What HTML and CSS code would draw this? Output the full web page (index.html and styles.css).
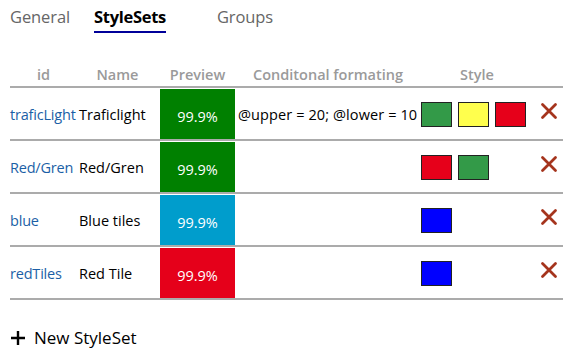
FILE: index.html
```html
<!DOCTYPE html>
<html>
<head>
<meta charset="utf-8">
<link rel="stylesheet" href="styles.css">
</head>
<body>
<div class="tabs">
  <span class="tab tab-general">General</span>
  <span class="tab tab-active">StyleSets</span>
  <span class="tab">Groups</span>
</div>
<table class="grid">
  <colgroup>
    <col class="c-id"><col class="c-name"><col class="c-prev"><col class="c-cond"><col class="c-style"><col class="c-del">
  </colgroup>
  <thead>
    <tr><th>id</th><th>Name</th><th>Preview</th><th>Conditonal formating</th><th>Style</th><th></th></tr>
  </thead>
  <tbody>
    <tr>
      <td class="id">traficLight</td>
      <td class="name">Traficlight</td>
      <td class="prev"><div class="pbox green">99.9%</div></td>
      <td class="cond">@upper = 20; @lower = 10</td>
      <td class="style"><div class="sw"><span class="s s-green"></span><span class="s s-yellow"></span><span class="s s-red"></span></div></td>
      <td class="del"><svg viewBox="0 0 18 18" width="18" height="18"><path d="M2.5 2.5 L15.5 15.5 M15.5 2.5 L2.5 15.5" stroke="#a5341d" stroke-width="2.8" stroke-linecap="round"/></svg></td>
    </tr>
    <tr>
      <td class="id">Red/Gren</td>
      <td class="name">Red/Gren</td>
      <td class="prev"><div class="pbox green">99.9%</div></td>
      <td class="cond"></td>
      <td class="style"><div class="sw"><span class="s s-red"></span><span class="s s-green"></span></div></td>
      <td class="del"><svg viewBox="0 0 18 18" width="18" height="18"><path d="M2.5 2.5 L15.5 15.5 M15.5 2.5 L2.5 15.5" stroke="#a5341d" stroke-width="2.8" stroke-linecap="round"/></svg></td>
    </tr>
    <tr>
      <td class="id">blue</td>
      <td class="name">Blue tiles</td>
      <td class="prev"><div class="pbox blue">99.9%</div></td>
      <td class="cond"></td>
      <td class="style"><div class="sw"><span class="s s-blue"></span></div></td>
      <td class="del"><svg viewBox="0 0 18 18" width="18" height="18"><path d="M2.5 2.5 L15.5 15.5 M15.5 2.5 L2.5 15.5" stroke="#a5341d" stroke-width="2.8" stroke-linecap="round"/></svg></td>
    </tr>
    <tr>
      <td class="id">redTiles</td>
      <td class="name">Red Tile</td>
      <td class="prev"><div class="pbox red">99.9%</div></td>
      <td class="cond"></td>
      <td class="style"><div class="sw"><span class="s s-blue"></span></div></td>
      <td class="del"><svg viewBox="0 0 18 18" width="18" height="18"><path d="M2.5 2.5 L15.5 15.5 M15.5 2.5 L2.5 15.5" stroke="#a5341d" stroke-width="2.8" stroke-linecap="round"/></svg></td>
    </tr>
  </tbody>
</table>
<div class="newset">
  <svg class="plus" viewBox="0 0 14 14" width="14" height="14"><path d="M7 0 V14 M0 7 H14" stroke="#000" stroke-width="2.4"/></svg>
  <span>New StyleSet</span>
</div>
</body>
</html>
```
FILE: styles.css
```css
html, body {
  margin: 0;
  padding: 0;
  background: #fff;
  font-family: "Open Sans", "Noto Sans", sans-serif;
  color: #000;
}
.tabs {
  display: flex;
  padding: 4px 0 0 10px;
  height: 29px;
}
.tab {
  font-size: 16.5px;
  color: #666;
  line-height: 26px;
  height: 27px;
  letter-spacing: -0.1px;
}
.tab-general { margin-right: 24px; }
.tab-active {
  color: #000;
  font-weight: 700;
  border-bottom: 2px solid #000099;
  margin-right: 51px;
  letter-spacing: -0.3px;
}
.grid {
  margin: 29px 0 0 10px;
  border-collapse: collapse;
  table-layout: fixed;
  width: 553px;
  font-size: 14.5px;
}
.c-id { width: 67px; }
.c-name { width: 81px; }
.c-prev { width: 79px; }
.c-cond { width: 182px; }
.c-style { width: 116px; }
.c-del { width: 28px; }
th {
  color: #9a9a9a;
  font-weight: 600;
  font-size: 14.5px;
  height: 24px;
  padding: 0;
  text-align: center;
  vertical-align: middle;
  border-bottom: 2px solid #ababab;
}
td {
  padding: 1px 0 0 0;
  height: 50px;
  border-bottom: 2px solid #ababab;
  vertical-align: middle;
  white-space: nowrap;
}
td.id { color: #1b5fa6; overflow: visible; letter-spacing: -0.2px; }
td.name { padding-left: 2px; }
td.prev { text-align: center; }
td.cond { padding-left: 1px; letter-spacing: 0.1px; }
td.style { padding-left: 2px; }
.pbox {
  width: 75px;
  height: 50px;
  margin: 0 auto;
  display: flex;
  align-items: center;
  justify-content: center;
  padding-top: 5px;
  box-sizing: border-box;
  color: #fff;
  font-size: 14.5px;
}
.green { background: #008000; }
.blue { background: #009dcc; }
.red { background: #e5001a; }
.sw {
  display: flex;
  gap: 6px;
  padding-top: 1px;
}
.s {
  width: 29px;
  height: 23px;
  border: 1px solid #222;
}
.s-green { background: #339a48; }
.s-yellow { background: #ffff4d; }
.s-red { background: #e6001a; }
.s-blue { background: #0000ff; }
td.del { padding-left: 5px; }
td.del svg { display: block; margin-bottom: 6px; }
.newset {
  display: flex;
  align-items: center;
  gap: 9px;
  margin: 26px 0 0 11px;
  font-size: 17px;
}
.plus { display: block; }
```
